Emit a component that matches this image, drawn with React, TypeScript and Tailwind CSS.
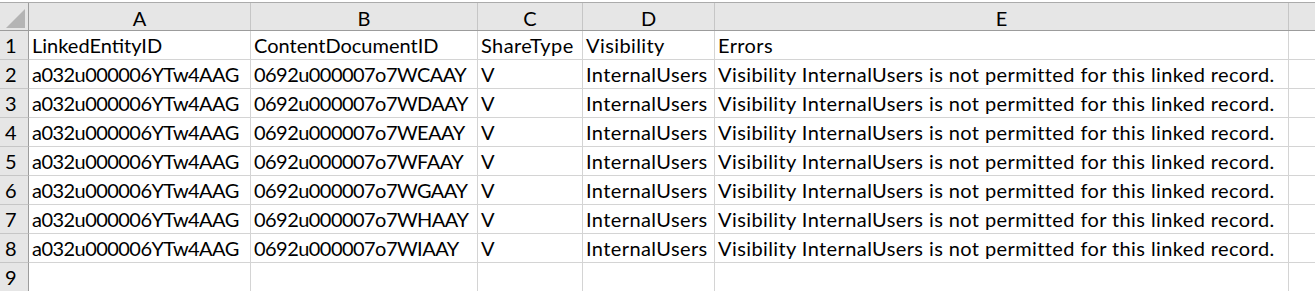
const cols = [
  { key: "A", w: "w-[222px]" },
  { key: "B", w: "w-[227px]" },
  { key: "C", w: "w-[105px]" },
  { key: "D", w: "w-[132px]" },
  { key: "E", w: "w-[574px]" },
];

const err = "Visibility InternalUsers is not permitted for this linked record.";

const rows: string[][] = [
  ["LinkedEntityID", "ContentDocumentID", "ShareType", "Visibility", "Errors"],
  ["a032u000006YTw4AAG", "0692u000007o7WCAAY", "V", "InternalUsers", err],
  ["a032u000006YTw4AAG", "0692u000007o7WDAAY", "V", "InternalUsers", err],
  ["a032u000006YTw4AAG", "0692u000007o7WEAAY", "V", "InternalUsers", err],
  ["a032u000006YTw4AAG", "0692u000007o7WFAAY", "V", "InternalUsers", err],
  ["a032u000006YTw4AAG", "0692u000007o7WGAAY", "V", "InternalUsers", err],
  ["a032u000006YTw4AAG", "0692u000007o7WHAAY", "V", "InternalUsers", err],
  ["a032u000006YTw4AAG", "0692u000007o7WIAAY", "V", "InternalUsers", err],
  ["", "", "", "", ""],
];

// Lato's digits run wider than the original font, letters a bit narrower
function tracking(row: number, col: number) {
  if (row > 0 && col < 2) return "tracking-[-0.55px]";
  if (col >= 2) return "tracking-[0.4px]";
  return "";
}

export default function App() {
  return (
    <div
      className="w-[1315px] h-[291px] overflow-hidden bg-white pt-[2px] text-[20px] leading-none text-black"
      style={{ fontFamily: '"Lato", "Liberation Sans", sans-serif' }}
    >
      {/* column headers */}
      <div className="flex h-[29px] border-t border-[#ababab] border-b border-b-[#9c9c9c] bg-[#e6e6e6]">
        <div className="relative w-[29px] shrink-0 border-r border-[#9c9c9c]">
          <svg className="absolute left-[6px] top-[6px]" width="19" height="19" viewBox="0 0 19 19">
            <polygon points="19,0 19,19 0,19" fill="#b4b4b4" />
          </svg>
        </div>
        {cols.map((c) => (
          <div
            key={c.key}
            className={`${c.w} shrink-0 border-r border-[#c6c6c6] flex items-end justify-center pb-[2px]`}
          >
            {c.key}
          </div>
        ))}
        <div className="flex-1" />
      </div>

      {rows.map((r, i) => (
        <div key={i} className="flex h-[29px]">
          <div className="w-[29px] shrink-0 bg-[#e6e6e6] border-r border-[#9c9c9c] border-b border-b-[#c6c6c6] flex items-end pl-[5px] pb-[4px]">
            {i + 1}
          </div>
          {cols.map((c, j) => (
            <div
              key={c.key}
              className={`${c.w} ${tracking(i, j)} shrink-0 border-r border-b border-[#d4d4d4] flex items-end pl-[3px] pb-[4px] whitespace-nowrap`}
            >
              {r[j]}
            </div>
          ))}
          <div className="flex-1 border-b border-[#d4d4d4]" />
        </div>
      ))}
    </div>
  );
}
